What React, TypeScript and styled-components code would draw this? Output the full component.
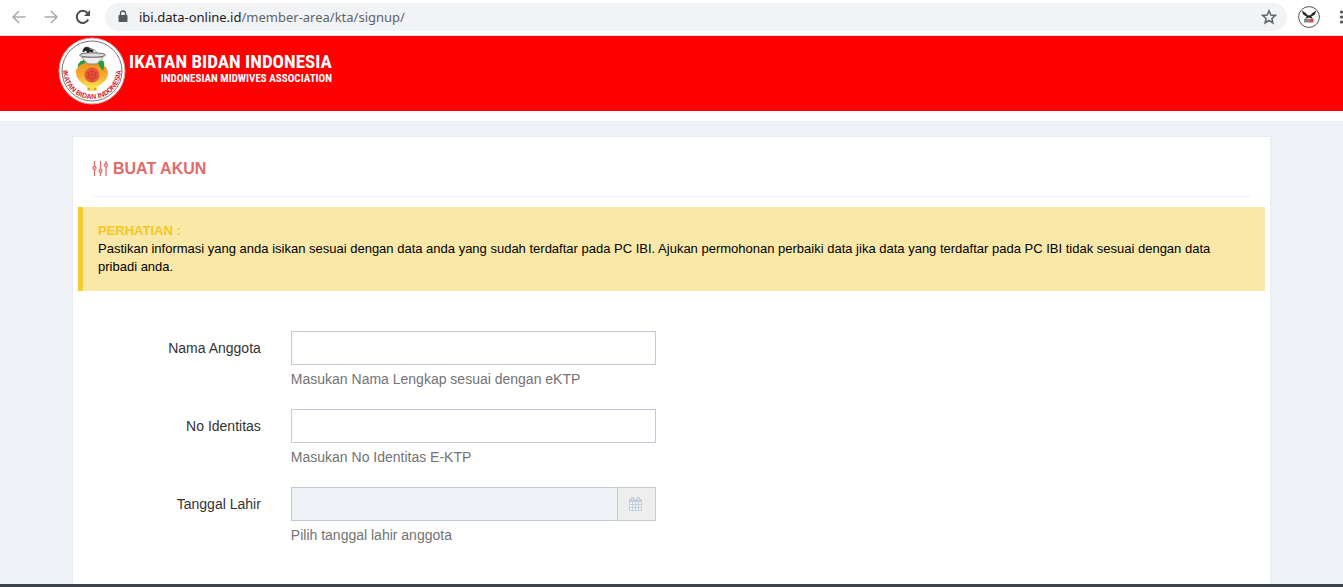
import React from "react";
import styled, { createGlobalStyle } from "styled-components";

const GlobalStyle = createGlobalStyle`
  * { box-sizing: border-box; }
  body {
    margin: 0;
    background: #eef1f5;
    color: #333;
    font: 14px/20px "Liberation Sans", Arial, sans-serif;
  }
`;

const Page = styled.div`
  display: flex;
  flex-direction: column;
  min-height: 100vh;
`;

const Toolbar = styled.nav`
  display: flex;
  align-items: center;
  height: 36px;
  padding: 0 0 2px 3px;
  background: #fff;
  border-bottom: 1px solid #dadce8;
`;

const IconButton = styled.button<{ $width?: number; $align?: string }>`
  display: flex;
  align-items: center;
  justify-content: ${(p) => p.$align ?? "center"};
  flex: none;
  width: ${(p) => p.$width ?? 32}px;
  height: 28px;
  padding: 0;
  border: 0;
  background: none;
`;

const AddressBar = styled.div`
  display: flex;
  align-items: center;
  flex: 1;
  height: 28px;
  margin: 0 11px 0 6px;
  padding: 0 8px 0 12px;
  border-radius: 14px;
  background: #f1f3f4;
`;

const Address = styled.span`
  flex: 1;
  margin-left: 10px;
  color: #5f6368;
  font: 13px/20px "Noto Sans", "Open Sans", sans-serif;
`;

const Host = styled.span`
  color: #202124;
`;

const Header = styled.header`
  display: flex;
  height: 75px;
  padding: 1px 58px;
  background: #f00;
`;

const Brand = styled.a`
  display: flex;
  align-items: flex-start;
  color: #fff;
  text-decoration: none;
`;

const BrandText = styled.span`
  display: flex;
  flex-direction: column;
  align-items: flex-end;
  margin: 15px 0 0 3px;
  font-family: "Roboto Condensed", Roboto, sans-serif;
  font-weight: 700;
  white-space: nowrap;
`;

const BrandName = styled.span`
  font-size: 19px;
  line-height: 20px;
`;

const BrandSub = styled.span`
  font-size: 11px;
  line-height: 14px;
`;

const Main = styled.main`
  display: flex;
  flex: 1;
  padding: 15px 72px 0;
  border-top: 10px solid #fff;
`;

const Card = styled.section`
  flex: 1;
  padding: 0 5px;
  border: 1px solid #e7ecf1;
  border-bottom: 0;
  background: #fff;
`;

const CardTitle = styled.h1`
  display: flex;
  align-items: center;
  gap: 4px;
  height: 60px;
  margin: 0 15px 10px 14px;
  padding-top: 5px;
  border-bottom: 1px solid #eef1f5;
  color: #e26a6a;
  font-size: 16px;
  line-height: 18px;
`;

const Notice = styled.div`
  padding: 15px 30px 15px 15px;
  border-left: 5px solid #f4cb30;
  background: #fae8a9;
  color: #000;
  font-size: 13px;
  line-height: 18px;
`;

const NoticeTitle = styled.strong`
  display: block;
  color: #f3c71c;
`;

const NoticeText = styled.p`
  margin: 0;
`;

const Form = styled.form`
  padding: 40px 0 16px;
`;

const Field = styled.div`
  display: grid;
  grid-template-columns: 2fr 4fr 6fr;
  margin-bottom: 20px;
`;

const Label = styled.label`
  padding: 7px 15px 0;
  text-align: right;
`;

const Control = styled.div`
  padding: 0 16px 0 15px;
`;

const InputGroup = styled.div`
  display: flex;
`;

const Input = styled.input`
  flex: 1;
  min-width: 0;
  height: 34px;
  padding: 6px 12px;
  border: 1px solid #c2cad8;
  border-radius: 0;
  background: #fff;
  font: inherit;
  outline: 0;

  &:read-only {
    background: #eef1f5;
  }
`;

const DateButton = styled.button`
  display: flex;
  align-items: center;
  justify-content: center;
  width: 38px;
  padding: 0;
  border: 1px solid #ccc;
  border-left: 0;
  background: #eee;
`;

const Help = styled.span`
  display: block;
  margin-top: 4px;
  color: #737373;
`;

const Footer = styled.footer`
  height: 3px;
  background: #3b434c;
`;

function Logo() {
  return (
    <svg width="68" height="68" viewBox="0 0 68 68" aria-hidden="true">
      <defs>
        <linearGradient id="gourd" x1="0" y1="0" x2="0" y2="1">
          <stop offset="0" stopColor="#f0921c" />
          <stop offset="0.5" stopColor="#f8ad35" />
          <stop offset="0.85" stopColor="#fbe04e" />
          <stop offset="1" stopColor="#f6dc63" />
        </linearGradient>
        <path id="ring" d="M5 33 A29 29 0 0 0 63 33" />
      </defs>
      <circle cx="34" cy="34" r="33" fill="#fff" stroke="#c9a5a0" strokeWidth="1" />
      <circle cx="34" cy="34" r="30" fill="none" stroke="#777" strokeWidth="1" />
      <path d="M27 23 C22 23 19 27 20 32 C24 31 27 28 28 25Z" fill="#1f9d3f" />
      <path d="M28 26 C22 27 17 31 18 37 C19 43 25 47 29 50 L29 54 L39 54 L39 50 C44 47 50 43 50 36 C50 30 45 27 40 26Z" fill="url(#gourd)" />
      <path d="M42 24 C47 22 47 28 45 34 C43 31 41 29 40 26Z" fill="#1f9d3f" />
      <circle cx="34" cy="38" r="7.500" fill="#e8573a" />
      <circle cx="34" cy="38" r="4" fill="none" stroke="#c8392b" strokeWidth="1" />
      <path d="M28 35 L40 41 M28 41 L40 35 M34 31 V45" stroke="#d0402e" strokeWidth="1" />
      <path d="M24 20 C26 25 30 25 30 27 L39 27 C39 25 43 24 45 20Z" fill="#eee" stroke="#888" strokeWidth="1" />
      <ellipse cx="34.500" cy="18" rx="13" ry="2.200" fill="#e0e0e0" stroke="#666" strokeWidth="1" />
      <path d="M25 15 C25 11 28 9 31 11 C33 12 35 12 35 15 L31 14 L30 16 L28 13Z" fill="#222" stroke="#222" />
      <path d="M31 12 C37 12 39 14 38 17" fill="none" stroke="#888" strokeWidth="1" />
      <path d="M31 51 V53 M37 51 V53" stroke="#d9822b" strokeWidth="1.500" />
      <text fill="#d4201c" fontFamily="Liberation Sans, sans-serif" fontWeight="700" fontSize="7">
        <textPath href="#ring" startOffset="50%" textAnchor="middle">
          IKATAN BIDAN INDONESIA
        </textPath>
      </text>
    </svg>
  );
}

function BackIcon() {
  return (
    <svg width="16" height="16" viewBox="0 0 16 16" fill="none" stroke="#a9acb0" strokeWidth="1.600">
      <path d="M14.500 8H2.500M8 2 2 8 8 14" />
    </svg>
  );
}

function ForwardIcon() {
  return (
    <svg width="16" height="16" viewBox="0 0 16 16" fill="none" stroke="#a9acb0" strokeWidth="1.600">
      <path d="M1.500 8H13.500M8 2 14 8 8 14" />
    </svg>
  );
}

function ReloadIcon() {
  return (
    <svg width="16" height="16" viewBox="0 0 16 16">
      <path d="M13.200 10.500A6 6 0 1 1 12.400 4" fill="none" stroke="#4b4e52" strokeWidth="2" />
      <path d="M15 1V7H9Z" fill="#4b4e52" />
    </svg>
  );
}

function LockIcon() {
  return (
    <svg width="12" height="14" viewBox="0 0 12 14">
      <rect x="1.500" y="5" width="9" height="7" rx="1" fill="#55585c" />
      <path d="M3.500 6V3.500a2.500 2.500 0 0 1 5 0V6" fill="none" stroke="#55585c" strokeWidth="1.300" />
    </svg>
  );
}

function StarIcon() {
  return (
    <svg width="16" height="16" viewBox="0 0 16 16">
      <path
        d="M8 1.800 9.800 6 14.300 6.400 10.900 9.400 11.900 13.900 8 11.500 4.100 13.900 5.100 9.400 1.700 6.400 6.200 6Z"
        fill="none"
        stroke="#5f6368"
        strokeWidth="1.500"
      />
    </svg>
  );
}

function ProfileIcon() {
  return (
    <svg width="22" height="22" viewBox="0 0 22 22">
      <circle cx="11" cy="11" r="10.400" fill="#fff" stroke="#555" strokeWidth="1" />
      <path
        d="M4 5 8 7.500 9.500 9.500 H12.500 L14 7.500 18 5 16.500 8.500 13 10.500 14.500 12.500 11 11.500 7.500 12.500 9 10.500 5.500 8.500Z"
        fill="#222"
        stroke="#222"
        strokeWidth="0.500"
      />
      <path d="M7 13V16.500M9 13V16.500M11 13V16.500" stroke="#555" strokeWidth="1.400" />
      <rect x="12" y="13" width="3.500" height="3.500" fill="#e0474c" />
    </svg>
  );
}

function MenuIcon() {
  return (
    <svg width="4" height="16" viewBox="0 0 4 16" fill="#55585f">
      <circle cx="2.500" cy="3" r="1.600" />
      <circle cx="2.500" cy="8" r="1.600" />
      <circle cx="2.500" cy="13" r="1.600" />
    </svg>
  );
}

function EqualizerIcon() {
  return (
    <svg width="17" height="16" viewBox="0 0 17 16" fill="none" stroke="#e26a6a" strokeWidth="1.300">
      <path d="M2.500 0V5.500M2.500 8.500V15M8.500 0V8.500M8.500 11.500V15M14 0V2.500M14 5.500V15" />
      <circle cx="2.500" cy="7" r="1.500" />
      <circle cx="8.500" cy="10" r="1.500" />
      <circle cx="14" cy="4" r="1.500" />
    </svg>
  );
}

function CalendarIcon() {
  return (
    <svg width="14" height="14" viewBox="0 0 14 14">
      <path d="M0 2H13V14H0Z" fill="#c2cfdf" />
      <path
        d="M1 5H3V7H1ZM4 5H6V7H4ZM7 5H9V7H7ZM10 5H12V7H10ZM1 8H3V10H1ZM4 8H6V10H4ZM7 8H9V10H7ZM10 8H12V10H10ZM1 11H3V13H1ZM4 11H6V13H4ZM7 11H9V13H7ZM10 11H12V13H10Z"
        fill="#f1f2f4"
      />
      <path d="M2 0H5V4H2ZM8 0H11V4H8Z" fill="#c2cfdf" />
      <path d="M3 1H4V3H3ZM9 1H10V3H9Z" fill="#e4e8ee" />
    </svg>
  );
}

export default function App() {
  return (
    <>
      <GlobalStyle />
      <Page>
        <Toolbar>
          <IconButton aria-label="Back"><BackIcon /></IconButton>
          <IconButton aria-label="Forward"><ForwardIcon /></IconButton>
          <IconButton aria-label="Reload"><ReloadIcon /></IconButton>
          <AddressBar>
            <LockIcon />
            <Address><Host>ibi.data-online.id</Host>/member-area/kta/signup/</Address>
            <IconButton $width={20} aria-label="Bookmark"><StarIcon /></IconButton>
          </AddressBar>
          <IconButton $width={22} aria-label="Profile"><ProfileIcon /></IconButton>
          <IconButton $width={23} $align="flex-end" aria-label="Menu"><MenuIcon /></IconButton>
        </Toolbar>

        <Header>
          <Brand href="#">
            <Logo />
            <BrandText>
              <BrandName>IKATAN BIDAN INDONESIA</BrandName>
              <BrandSub>INDONESIAN MIDWIVES ASSOCIATION</BrandSub>
            </BrandText>
          </Brand>
        </Header>

        <Main>
          <Card>
            <CardTitle><EqualizerIcon />BUAT AKUN</CardTitle>
            <Notice>
              <NoticeTitle>PERHATIAN :</NoticeTitle>
              <NoticeText>
                Pastikan informasi yang anda isikan sesuai dengan data anda yang sudah terdaftar pada PC IBI.
                Ajukan permohonan perbaiki data jika data yang terdaftar pada PC IBI tidak sesuai dengan data
                pribadi anda.
              </NoticeText>
            </Notice>
            <Form>
              <Field>
                <Label htmlFor="nama">Nama Anggota</Label>
                <Control>
                  <InputGroup><Input id="nama" type="text" /></InputGroup>
                  <Help>Masukan Nama Lengkap sesuai dengan eKTP</Help>
                </Control>
              </Field>
              <Field>
                <Label htmlFor="identitas">No Identitas</Label>
                <Control>
                  <InputGroup><Input id="identitas" type="text" /></InputGroup>
                  <Help>Masukan No Identitas E-KTP</Help>
                </Control>
              </Field>
              <Field>
                <Label htmlFor="lahir">Tanggal Lahir</Label>
                <Control>
                  <InputGroup>
                    <Input id="lahir" type="text" readOnly />
                    <DateButton type="button" aria-label="Pilih tanggal"><CalendarIcon /></DateButton>
                  </InputGroup>
                  <Help>Pilih tanggal lahir anggota</Help>
                </Control>
              </Field>
            </Form>
          </Card>
        </Main>
        <Footer />
      </Page>
    </>
  );
}
